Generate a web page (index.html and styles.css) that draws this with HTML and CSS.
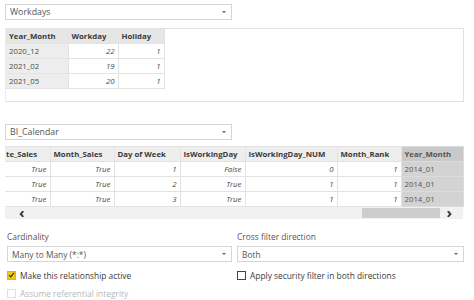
FILE: index.html
```html
<!DOCTYPE html>
<html lang="en">
<head>
    <meta charset="UTF-8">
    <title>Edit relationship</title>
    <link rel="stylesheet" href="styles.css">
</head>
<body>
    <div class="select select-top">
        <span>Workdays</span>
        <span class="caret"></span>
    </div>

    <div class="preview-panel">
        <table class="grid grid-small">
            <colgroup>
                <col style="width:62px">
                <col style="width:50px">
                <col style="width:46px">
            </colgroup>
            <tr>
                <th class="key">Year_Month</th>
                <th>Workday</th>
                <th>Holiday</th>
            </tr>
            <tr><td class="key">2020_12</td><td class="num">22</td><td class="num">1</td></tr>
            <tr><td class="key">2021_02</td><td class="num">19</td><td class="num">1</td></tr>
            <tr><td class="key">2021_05</td><td class="num">20</td><td class="num">1</td></tr>
        </table>
    </div>

    <div class="select select-second">
        <span>BI_Calendar</span>
        <span class="caret"></span>
    </div>

    <div class="wide-grid">
        <table class="grid grid-wide">
            <colgroup>
                <col style="width:45px">
                <col style="width:64px">
                <col style="width:66px">
                <col style="width:65px">
                <col style="width:92px">
                <col style="width:64px">
                <col style="width:62px">
            </colgroup>
            <tr>
                <th class="clipped">te_Sales</th>
                <th>Month_Sales</th>
                <th>Day of Week</th>
                <th>IsWorkingDay</th>
                <th>IsWorkingDay_NUM</th>
                <th>Month_Rank</th>
                <th class="picked">Year_Month</th>
            </tr>
            <tr>
                <td class="num">True</td><td class="num">True</td><td class="num">1</td><td class="num">False</td>
                <td class="num">0</td><td class="num">1</td><td class="picked">2014_01</td>
            </tr>
            <tr>
                <td class="num">True</td><td class="num">True</td><td class="num">2</td><td class="num">True</td>
                <td class="num">1</td><td class="num">1</td><td class="picked">2014_01</td>
            </tr>
            <tr>
                <td class="num">True</td><td class="num">True</td><td class="num">3</td><td class="num">True</td>
                <td class="num">1</td><td class="num">1</td><td class="picked">2014_01</td>
            </tr>
        </table>
        <div class="hscroll">
            <span class="arrow">&lsaquo;</span>
            <span class="thumb"></span>
            <span class="arrow">&rsaquo;</span>
        </div>
    </div>

    <div class="options">
        <div class="option-col">
            <div class="label">Cardinality</div>
            <div class="select">
                <span>Many to Many (*:*)</span>
                <span class="caret"></span>
            </div>
            <div class="check">
                <span class="box box-on">
                    <svg width="8" height="8" viewBox="0 0 8 8"><path d="M1.2 4.2 L3.2 6.2 L6.9 1.6" fill="none" stroke="#333" stroke-width="1.4"/></svg>
                </span>
                <span>Make this relationship active</span>
            </div>
            <div class="check check-off">
                <span class="box"></span>
                <span>Assume referential integrity</span>
            </div>
        </div>
        <div class="option-col">
            <div class="label">Cross filter direction</div>
            <div class="select">
                <span>Both</span>
                <span class="caret"></span>
            </div>
            <div class="check">
                <span class="box box-plain"></span>
                <span>Apply security filter in both directions</span>
            </div>
        </div>
    </div>
</body>
</html>
```

FILE: styles.css
```css
body {
    margin: 0;
    padding: 4px 10px 0 5px;
    background-color: #fff;
    font-family: "Open Sans", "Noto Sans", sans-serif;
    color: #444;
    font-size: 8.4px;
}

.select {
    display: flex;
    align-items: center;
    justify-content: space-between;
    box-sizing: border-box;
    height: 16px;
    padding: 0 5px 0 4px;
    border: 1px solid #d6d6d6;
    background-color: #fff;
    color: #555;
    font-size: 8.4px;
}

.select-top,
.select-second {
    width: 227px;
    font-size: 8.8px;
}

.caret {
    width: 0;
    height: 0;
    border-left: 2px solid transparent;
    border-right: 2px solid transparent;
    border-top: 2px solid #666;
}

.preview-panel {
    margin-top: 8px;
    height: 72px;
    border: 1px solid #e2e2e2;
    border-left-color: #ececec;
}

.grid {
    border-collapse: collapse;
    table-layout: fixed;
    font-size: 7.8px;
    color: #4a4a4a;
}

.grid th,
.grid td {
    height: 14px;
    padding: 0 3px;
    border: 1px solid #e3e3e3;
    white-space: nowrap;
    overflow: hidden;
    text-align: left;
}

.grid th {
    font-weight: 700;
    background-color: #eeeeee;
    color: #3a3a3a;
}

.grid-small th {
    background-color: #e6e6e6;
    border-top: none;
    border-left: none;
}

.grid-small td.key {
    background-color: #ededed;
    border-left: none;
}

.grid .num {
    text-align: right;
    font-style: italic;
}

.select-second {
    margin-top: 22px;
}

.wide-grid {
    margin-top: 6px;
    width: 458px;
}

.grid-wide {
    width: 458px;
}

.grid-wide th.clipped,
.grid-wide tr td:first-child {
    border-left: none;
    padding-left: 1px;
}

.grid-wide .picked {
    background-color: #d3d3d3;
    border-color: #dcdcdc;
    color: #555;
}

.grid-wide th.picked {
    background-color: #c9c9c9;
}

.hscroll {
    display: flex;
    align-items: center;
    height: 12px;
    background-color: #f1f1f1;
}

.arrow {
    font-size: 15px;
    font-weight: 700;
    line-height: 12px;
    color: #333;
    padding: 0 10px 2px 14px;
}

.thumb {
    margin-left: auto;
    width: 78px;
    height: 10px;
    background-color: #cdcdcd;
}

.hscroll .arrow:last-child {
    padding: 0 11px 2px 6px;
}

.options {
    display: grid;
    grid-template-columns: 225px 227px;
    column-gap: 5px;
    margin-top: 11px;
    padding-left: 2px;
}

.label {
    height: 13px;
    line-height: 13px;
    margin-bottom: 3px;
    color: #555;
}

.check {
    display: flex;
    align-items: center;
    gap: 4px;
    margin-top: 7px;
    height: 12px;
    color: #3a3a3a;
}

.box {
    display: flex;
    align-items: center;
    justify-content: center;
    box-sizing: border-box;
    width: 9px;
    height: 9px;
    border: 1px solid #e0e0e0;
}

.box-on {
    background-color: #f2c811;
    border-color: #e0b800;
}

.box-plain {
    border: 1.5px solid #444;
}

.check-off {
    margin-top: 6px;
    color: #b8b8b8;
}
```
